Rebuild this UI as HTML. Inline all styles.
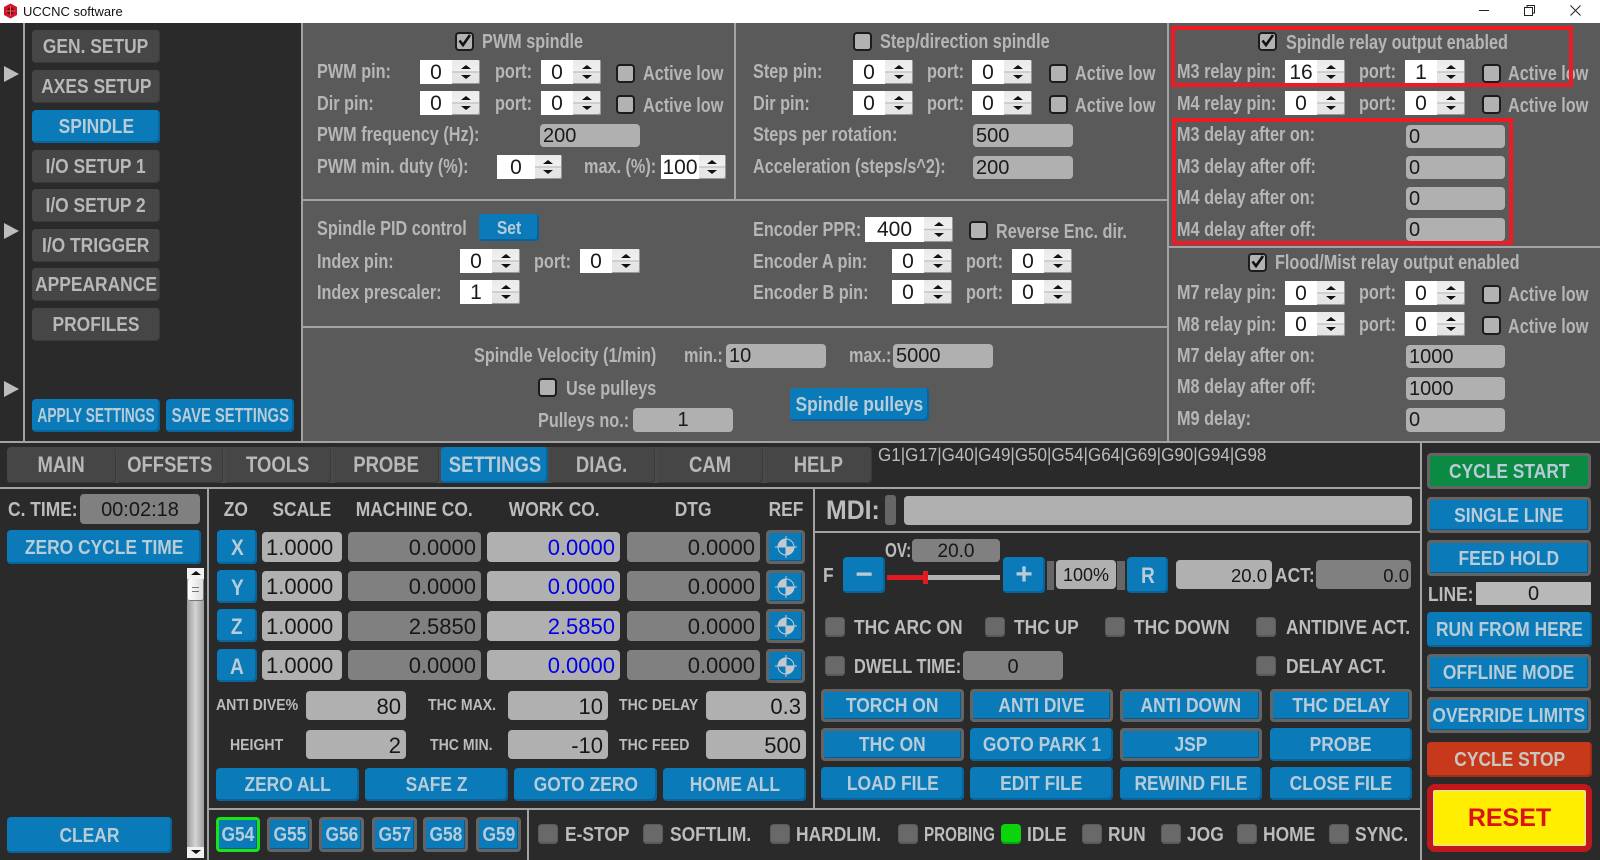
<!DOCTYPE html>
<html><head><meta charset="utf-8"><title>UCCNC software</title>
<style>
html,body{margin:0;padding:0;width:1600px;height:860px;overflow:hidden;background:#2a2a2a;font-family:"Liberation Sans",sans-serif}
div,i,svg{position:absolute;box-sizing:border-box}
.ln{background:#a3a3a3}
.l{white-space:nowrap;color:#b6b6b6;font:bold 20px/22px "Liberation Sans",sans-serif;transform:scaleX(.812);transform-origin:0 50%;margin-top:1px}
.s{white-space:nowrap;color:#bcbcbc;font:bold 20px/22px "Liberation Sans",sans-serif;transform:scaleX(.87);transform-origin:0 50%}
.t{white-space:nowrap;color:#bcbcbc;font:bold 16px/20px "Liberation Sans",sans-serif;transform:scaleX(.88);transform-origin:0 50%;margin-top:1px}
.b{display:flex;align-items:center;justify-content:center;border-radius:4px;font:bold 20px "Liberation Sans",sans-serif;color:#b8ccd8}
.b span{display:inline-block;white-space:nowrap;transform:scaleX(.87);margin-top:2px}
.tb{font-size:22px}
.tb span{transform:scaleX(.84);margin-top:0}
.bl{background:#0a7ab9;box-shadow:inset -2px -2px 0 #07659c}
.g{border:3px solid #646464;background:#0a7ab9;box-shadow:inset -1px -1px 0 #065c8f}
.d{background:#464646;box-shadow:inset -1px -1px 0 #3a3a3a;color:#b8b8b8}
.h{color:#bcbcbc}
.h span{margin-top:0}
.sp{height:24px;width:60px;margin-top:-1px;background:linear-gradient(#eaeaea 0,#f0f0f0 46%,#c4c4c4 48%,#c4c4c4 52%,#e6e6e6 54%,#e4e4e4 100%);border-radius:2px;box-shadow:inset -1px -1px 0 #999}
.sp i{left:0;top:0;bottom:0;width:32px;background:#fff;font:normal 21px/25px "Liberation Sans",sans-serif;color:#1a1a1a;text-align:center}
.sp::before,.sp::after{content:"";position:absolute;right:9px;border-left:5px solid transparent;border-right:5px solid transparent}
.sp::before{top:5px;border-bottom:4px solid #111}
.sp::after{bottom:5px;border-top:4px solid #111}
.cb{width:19px;height:19px;border:2px solid #1c1c1c;border-radius:4px;background:#b2b2b2}
.in{background:#b0b0b0;border-radius:4px;color:#1a1a1a;font:normal 20px/24px "Liberation Sans",sans-serif;padding-left:3px;white-space:nowrap}
.nu{background:#b0b0b0;border-radius:4px;color:#171717;font:normal 22px/30px "Liberation Sans",sans-serif;text-align:right;padding:1px 5px 0 0;white-space:nowrap}
.dk{background:#808080}
.bu{color:#0000e6}
.ctr{text-align:center;padding-right:0}
.lf{text-align:left;padding-left:4px;padding-right:0}
.ind{width:20px;height:20px;background:#696969;border-radius:4px;box-shadow:inset 0 -2px 0 #595959,inset 0 0 0 1px #5a5a5a}
.red{border:4px solid #ed1c24}
.tri{width:0;height:0;border-left:15px solid #bdbdbd;border-top:8px solid transparent;border-bottom:8px solid transparent;left:4px}
</style></head><body>

<!-- title bar -->
<div style="left:0;top:0;width:1600px;height:23px;background:#fff"></div>
<svg style="left:3px;top:3px" width="15" height="16" viewBox="0 0 15 16"><path d="M7.5 0.5L14 4v8l-6.5 3.5L1 12V4z" fill="#d4142a"/><circle cx="7.5" cy="8" r="3.6" fill="#6a1018"/><path d="M7.5 3v10M3 8h9" stroke="#ee606a" stroke-width="1"/></svg>
<div style="left:23px;top:3px;font:13px/17px 'Liberation Sans',sans-serif;color:#111;white-space:nowrap">UCCNC software</div>
<svg style="left:1470px;top:0" width="130" height="23" viewBox="0 0 130 23" fill="none" stroke="#222" stroke-width="1"><path d="M9 10.5h10"/><path d="M54.5 7.5h8v8h-8z"/><path d="M57 7.5V5.5h7.5v7.5h-2"/><path d="M100.5 5.5l10 10M110.5 5.5l-10 10"/></svg>

<!-- left sidebar -->
<div class="ln" style="left:23px;top:23px;width:2px;height:418px"></div>
<div class="tri" style="top:66px"></div>
<div class="tri" style="top:223px"></div>
<div class="tri" style="top:381px"></div>
<div class="b d" style="left:32px;top:30px;width:128px;height:33px"><span>GEN. SETUP</span></div>
<div class="b d" style="left:32px;top:70px;width:128px;height:33px"><span>AXES SETUP</span></div>
<div class="b bl" style="left:32px;top:110px;width:128px;height:33px"><span>SPINDLE</span></div>
<div class="b d" style="left:32px;top:150px;width:128px;height:33px"><span>I/O SETUP 1</span></div>
<div class="b d" style="left:32px;top:189px;width:128px;height:33px"><span>I/O SETUP 2</span></div>
<div class="b d" style="left:32px;top:229px;width:128px;height:33px"><span>I/O TRIGGER</span></div>
<div class="b d" style="left:32px;top:268px;width:128px;height:33px"><span>APPEARANCE</span></div>
<div class="b d" style="left:32px;top:308px;width:128px;height:33px"><span>PROFILES</span></div>
<div class="b bl" style="left:32px;top:399px;width:128px;height:33px;font-size:20px"><span style="transform:scaleX(.69)">APPLY SETTINGS</span></div>
<div class="b bl" style="left:166px;top:399px;width:128px;height:33px;font-size:20px"><span style="transform:scaleX(.74)">SAVE SETTINGS</span></div>

<!-- settings panel -->
<div style="left:302px;top:23px;width:1298px;height:418px;background:#5a5a5a"></div>
<div class="ln" style="left:301px;top:23px;width:2px;height:418px"></div>
<div class="ln" style="left:734px;top:23px;width:2px;height:177px"></div>
<div class="ln" style="left:302px;top:199px;width:865px;height:2px"></div>
<div class="ln" style="left:302px;top:326px;width:865px;height:2px"></div>
<div class="ln" style="left:1167px;top:23px;width:2px;height:418px"></div>
<div class="ln" style="left:1168px;top:246px;width:432px;height:2px"></div>

<!-- PWM section -->
<div class="cb" style="left:455px;top:32px"><svg style="left:0;top:-1px" width="15" height="15" viewBox="0 0 15 15"><path d="M2.5 7.5l3.5 4.5 7-10" fill="none" stroke="#111" stroke-width="2.6"/></svg></div>
<div class="l" style="left:482px;top:30px">PWM spindle</div>
<div class="l" style="left:317px;top:60px">PWM pin:</div>
<div class="sp" style="left:420px;top:61px"><i>0</i></div>
<div class="l" style="left:495px;top:60px">port:</div>
<div class="sp" style="left:541px;top:61px"><i>0</i></div>
<div class="cb" style="left:616px;top:64px"></div>
<div class="l" style="left:643px;top:62px">Active low</div>
<div class="l" style="left:317px;top:92px">Dir pin:</div>
<div class="sp" style="left:420px;top:92px"><i>0</i></div>
<div class="l" style="left:495px;top:92px">port:</div>
<div class="sp" style="left:541px;top:92px"><i>0</i></div>
<div class="cb" style="left:616px;top:95px"></div>
<div class="l" style="left:643px;top:94px">Active low</div>
<div class="l" style="left:317px;top:123px">PWM frequency (Hz):</div>
<div class="in" style="left:540px;top:124px;width:100px;height:23px">200</div>
<div class="l" style="left:317px;top:155px">PWM min. duty (%):</div>
<div class="sp" style="left:497px;top:156px;width:65px"><i style="width:38px">0</i></div>
<div class="l" style="left:584px;top:155px">max. (%):</div>
<div class="sp" style="left:661px;top:156px;width:65px"><i style="width:38px">100</i></div>

<!-- Step/dir section -->
<div class="cb" style="left:853px;top:32px"></div>
<div class="l" style="left:880px;top:30px">Step/direction spindle</div>
<div class="l" style="left:753px;top:60px">Step pin:</div>
<div class="sp" style="left:853px;top:61px"><i>0</i></div>
<div class="l" style="left:927px;top:60px">port:</div>
<div class="sp" style="left:972px;top:61px"><i>0</i></div>
<div class="cb" style="left:1049px;top:64px"></div>
<div class="l" style="left:1075px;top:62px">Active low</div>
<div class="l" style="left:753px;top:92px">Dir pin:</div>
<div class="sp" style="left:853px;top:92px"><i>0</i></div>
<div class="l" style="left:927px;top:92px">port:</div>
<div class="sp" style="left:972px;top:92px"><i>0</i></div>
<div class="cb" style="left:1049px;top:95px"></div>
<div class="l" style="left:1075px;top:94px">Active low</div>
<div class="l" style="left:753px;top:123px">Steps per rotation:</div>
<div class="in" style="left:973px;top:124px;width:100px;height:23px">500</div>
<div class="l" style="left:753px;top:155px">Acceleration (steps/s^2):</div>
<div class="in" style="left:973px;top:156px;width:100px;height:23px">200</div>

<!-- PID section -->
<div class="l" style="left:317px;top:217px">Spindle PID control</div>
<div class="b bl" style="left:479px;top:214px;width:60px;height:27px;font-size:18px;border-radius:3px"><span>Set</span></div>
<div class="l" style="left:317px;top:250px">Index pin:</div>
<div class="sp" style="left:460px;top:250px"><i>0</i></div>
<div class="l" style="left:534px;top:250px">port:</div>
<div class="sp" style="left:580px;top:250px"><i>0</i></div>
<div class="l" style="left:317px;top:281px">Index prescaler:</div>
<div class="sp" style="left:460px;top:281px"><i>1</i></div>
<div class="l" style="left:753px;top:218px">Encoder PPR:</div>
<div class="sp" style="left:865px;top:218px;width:88px;height:25px"><i style="width:59px">400</i></div>
<div class="cb" style="left:969px;top:221px"></div>
<div class="l" style="left:996px;top:220px">Reverse Enc. dir.</div>
<div class="l" style="left:753px;top:250px">Encoder A pin:</div>
<div class="sp" style="left:892px;top:250px"><i>0</i></div>
<div class="l" style="left:966px;top:250px">port:</div>
<div class="sp" style="left:1012px;top:250px"><i>0</i></div>
<div class="l" style="left:753px;top:281px">Encoder B pin:</div>
<div class="sp" style="left:892px;top:281px"><i>0</i></div>
<div class="l" style="left:966px;top:281px">port:</div>
<div class="sp" style="left:1012px;top:281px"><i>0</i></div>

<!-- Velocity section -->
<div class="l" style="left:474px;top:344px">Spindle Velocity (1/min)</div>
<div class="l" style="left:684px;top:344px">min.:</div>
<div class="in" style="left:726px;top:344px;width:100px;height:24px">10</div>
<div class="l" style="left:849px;top:344px">max.:</div>
<div class="in" style="left:893px;top:344px;width:100px;height:24px">5000</div>
<div class="cb" style="left:538px;top:378px"></div>
<div class="l" style="left:566px;top:377px">Use pulleys</div>
<div class="l" style="left:538px;top:409px">Pulleys no.:</div>
<div class="in" style="left:633px;top:408px;width:100px;height:24px;padding:0;text-align:center">1</div>
<div class="b bl" style="left:790px;top:388px;width:139px;height:33px"><span>Spindle pulleys</span></div>

<!-- Relay section -->
<div class="cb" style="left:1258px;top:32px"><svg style="left:0;top:-1px" width="15" height="15" viewBox="0 0 15 15"><path d="M2.5 7.5l3.5 4.5 7-10" fill="none" stroke="#111" stroke-width="2.6"/></svg></div>
<div class="l" style="left:1286px;top:31px">Spindle relay output enabled</div>
<div class="l" style="left:1177px;top:60px">M3 relay pin:</div>
<div class="sp" style="left:1285px;top:61px"><i>16</i></div>
<div class="l" style="left:1359px;top:60px">port:</div>
<div class="sp" style="left:1405px;top:61px"><i>1</i></div>
<div class="cb" style="left:1482px;top:64px"></div>
<div class="l" style="left:1508px;top:62px">Active low</div>
<div class="l" style="left:1177px;top:92px">M4 relay pin:</div>
<div class="sp" style="left:1285px;top:92px"><i>0</i></div>
<div class="l" style="left:1359px;top:92px">port:</div>
<div class="sp" style="left:1405px;top:92px"><i>0</i></div>
<div class="cb" style="left:1482px;top:95px"></div>
<div class="l" style="left:1508px;top:94px">Active low</div>
<div class="l" style="left:1177px;top:123px">M3 delay after on:</div>
<div class="in" style="left:1406px;top:125px;width:99px;height:23px">0</div>
<div class="l" style="left:1177px;top:155px">M3 delay after off:</div>
<div class="in" style="left:1406px;top:156px;width:99px;height:23px">0</div>
<div class="l" style="left:1177px;top:186px">M4 delay after on:</div>
<div class="in" style="left:1406px;top:187px;width:99px;height:23px">0</div>
<div class="l" style="left:1177px;top:218px">M4 delay after off:</div>
<div class="in" style="left:1406px;top:218px;width:99px;height:23px">0</div>
<div class="red" style="left:1171px;top:26px;width:402px;height:61px"></div>
<div class="red" style="left:1172px;top:118px;width:341px;height:127px"></div>

<div class="cb" style="left:1248px;top:253px"><svg style="left:0;top:-1px" width="15" height="15" viewBox="0 0 15 15"><path d="M2.5 7.5l3.5 4.5 7-10" fill="none" stroke="#111" stroke-width="2.6"/></svg></div>
<div class="l" style="left:1275px;top:251px">Flood/Mist relay output enabled</div>
<div class="l" style="left:1177px;top:281px">M7 relay pin:</div>
<div class="sp" style="left:1285px;top:282px"><i>0</i></div>
<div class="l" style="left:1359px;top:281px">port:</div>
<div class="sp" style="left:1405px;top:282px"><i>0</i></div>
<div class="cb" style="left:1482px;top:285px"></div>
<div class="l" style="left:1508px;top:283px">Active low</div>
<div class="l" style="left:1177px;top:313px">M8 relay pin:</div>
<div class="sp" style="left:1285px;top:313px"><i>0</i></div>
<div class="l" style="left:1359px;top:313px">port:</div>
<div class="sp" style="left:1405px;top:313px"><i>0</i></div>
<div class="cb" style="left:1482px;top:316px"></div>
<div class="l" style="left:1508px;top:315px">Active low</div>
<div class="l" style="left:1177px;top:344px">M7 delay after on:</div>
<div class="in" style="left:1406px;top:345px;width:99px;height:23px">1000</div>
<div class="l" style="left:1177px;top:375px">M8 delay after off:</div>
<div class="in" style="left:1406px;top:377px;width:99px;height:23px">1000</div>
<div class="l" style="left:1177px;top:407px">M9 delay:</div>
<div class="in" style="left:1406px;top:408px;width:99px;height:24px">0</div>

<!-- lines main -->
<div class="ln" style="left:0;top:441px;width:1600px;height:2px"></div>
<div class="ln" style="left:0;top:487px;width:1420px;height:2px"></div>
<div class="ln" style="left:1420px;top:441px;width:2px;height:419px"></div>
<div class="ln" style="left:207px;top:488px;width:2px;height:372px"></div>
<div class="ln" style="left:813px;top:488px;width:2px;height:321px"></div>
<div class="ln" style="left:814px;top:531px;width:606px;height:2px"></div>
<div class="ln" style="left:208px;top:808px;width:1212px;height:2px"></div>
<div class="ln" style="left:527px;top:809px;width:2px;height:51px"></div>

<!-- tabs -->
<div style="left:7px;top:447px;width:865px;height:36px;background:#4a4a4a;border-radius:5px"></div>
<div class="b d tb" style="left:7px;top:447px;width:109px;height:36px"><span>MAIN</span></div>
<div class="b d tb" style="left:117px;top:447px;width:106px;height:36px"><span>OFFSETS</span></div>
<div class="b d tb" style="left:225px;top:447px;width:106px;height:36px"><span>TOOLS</span></div>
<div class="b d tb" style="left:333px;top:447px;width:106px;height:36px"><span>PROBE</span></div>
<div class="b bl tb" style="left:441px;top:447px;width:107px;height:36px"><span>SETTINGS</span></div>
<div class="b d tb" style="left:549px;top:447px;width:106px;height:36px"><span>DIAG.</span></div>
<div class="b d tb" style="left:657px;top:447px;width:106px;height:36px"><span>CAM</span></div>
<div class="b d tb" style="left:765px;top:447px;width:107px;height:36px"><span>HELP</span></div>
<div style="left:878px;top:444px;font:18px/22px 'Liberation Sans',sans-serif;color:#bcbcbc;white-space:nowrap;transform:scaleX(.945);transform-origin:0 50%">G1|G17|G40|G49|G50|G54|G64|G69|G90|G94|G98</div>

<!-- left column -->
<div class="s" style="left:8px;top:499px">C. TIME:</div>
<div class="nu dk ctr" style="left:80px;top:494px;width:120px;height:30px;font-size:20px">00:02:18</div>
<div class="b bl" style="left:7px;top:530px;width:194px;height:34px"><span>ZERO CYCLE TIME</span></div>
<div style="left:187px;top:568px;width:17px;height:290px;background:linear-gradient(90deg,#9a9a9a,#d4d4d4 50%,#9c9c9c)"></div>
<div style="left:187px;top:568px;width:17px;height:11px;background:#f2f2f2"></div>
<div style="left:191px;top:571px;width:0;height:0;border-left:5px solid transparent;border-right:5px solid transparent;border-bottom:4px solid #111"></div>
<div style="left:188px;top:579px;width:15px;height:21px;background:linear-gradient(90deg,#fff,#dcdcdc);border-radius:2px;box-shadow:1px 1px 0 #777"></div>
<div style="left:192px;top:587px;width:7px;height:5px;border-top:1px solid #777;border-bottom:1px solid #777"></div>
<div style="left:187px;top:847px;width:17px;height:11px;background:#f2f2f2"></div>
<div style="left:191px;top:850px;width:0;height:0;border-left:5px solid transparent;border-right:5px solid transparent;border-top:4px solid #111"></div>
<div class="b bl" style="left:7px;top:817px;width:165px;height:36px"><span>CLEAR</span></div>

<!-- table -->
<div class="b h" style="left:216px;top:499px;width:40px;height:22px"><span>ZO</span></div>
<div class="b h" style="left:262px;top:499px;width:80px;height:22px"><span>SCALE</span></div>
<div class="b h" style="left:348px;top:499px;width:133px;height:22px"><span>MACHINE CO.</span></div>
<div class="b h" style="left:487px;top:499px;width:135px;height:22px"><span>WORK CO.</span></div>
<div class="b h" style="left:627px;top:499px;width:133px;height:22px"><span>DTG</span></div>
<div class="b h" style="left:766px;top:499px;width:40px;height:22px"><span>REF</span></div>

<div class="b bl" style="left:217px;top:530px;width:40px;height:34px;font-size:22px"><span>X</span></div>
<div class="nu lf" style="left:262px;top:532px;width:80px;height:30px">1.0000</div>
<div class="nu dk" style="left:348px;top:532px;width:133px;height:30px">0.0000</div>
<div class="nu bu" style="left:487px;top:532px;width:133px;height:30px">0.0000</div>
<div class="nu dk" style="left:627px;top:532px;width:133px;height:30px">0.0000</div>
<div class="b g" style="left:766px;top:530px;width:39px;height:34px"><svg width="24" height="24" viewBox="0 0 24 24" style="left:5px;top:2px"><path d="M12 12V4A8 8 0 0 0 4 12Z M12 12V20A8 8 0 0 0 20 12Z" fill="#c4c8cc"/><circle cx="12" cy="12" r="8" fill="none" stroke="#c4ccd2" stroke-width="1"/><path d="M12 1v22M1 12h22" stroke="#c4ccd2" stroke-width="1"/></svg></div>

<div class="b bl" style="left:217px;top:570px;width:40px;height:33px;font-size:22px"><span>Y</span></div>
<div class="nu lf" style="left:262px;top:571px;width:80px;height:30px">1.0000</div>
<div class="nu dk" style="left:348px;top:571px;width:133px;height:30px">0.0000</div>
<div class="nu bu" style="left:487px;top:571px;width:133px;height:30px">0.0000</div>
<div class="nu dk" style="left:627px;top:571px;width:133px;height:30px">0.0000</div>
<div class="b g" style="left:766px;top:570px;width:39px;height:34px"><svg width="24" height="24" viewBox="0 0 24 24" style="left:5px;top:2px"><path d="M12 12V4A8 8 0 0 0 4 12Z M12 12V20A8 8 0 0 0 20 12Z" fill="#c4c8cc"/><circle cx="12" cy="12" r="8" fill="none" stroke="#c4ccd2" stroke-width="1"/><path d="M12 1v22M1 12h22" stroke="#c4ccd2" stroke-width="1"/></svg></div>

<div class="b bl" style="left:217px;top:609px;width:40px;height:33px;font-size:22px"><span>Z</span></div>
<div class="nu lf" style="left:262px;top:611px;width:80px;height:30px">1.0000</div>
<div class="nu dk" style="left:348px;top:611px;width:133px;height:30px">2.5850</div>
<div class="nu bu" style="left:487px;top:611px;width:133px;height:30px">2.5850</div>
<div class="nu dk" style="left:627px;top:611px;width:133px;height:30px">0.0000</div>
<div class="b g" style="left:766px;top:609px;width:39px;height:34px"><svg width="24" height="24" viewBox="0 0 24 24" style="left:5px;top:2px"><path d="M12 12V4A8 8 0 0 0 4 12Z M12 12V20A8 8 0 0 0 20 12Z" fill="#c4c8cc"/><circle cx="12" cy="12" r="8" fill="none" stroke="#c4ccd2" stroke-width="1"/><path d="M12 1v22M1 12h22" stroke="#c4ccd2" stroke-width="1"/></svg></div>

<div class="b bl" style="left:217px;top:649px;width:40px;height:33px;font-size:22px"><span>A</span></div>
<div class="nu lf" style="left:262px;top:650px;width:80px;height:30px">1.0000</div>
<div class="nu dk" style="left:348px;top:650px;width:133px;height:30px">0.0000</div>
<div class="nu bu" style="left:487px;top:650px;width:133px;height:30px">0.0000</div>
<div class="nu dk" style="left:627px;top:650px;width:133px;height:30px">0.0000</div>
<div class="b g" style="left:766px;top:649px;width:39px;height:34px"><svg width="24" height="24" viewBox="0 0 24 24" style="left:5px;top:2px"><path d="M12 12V4A8 8 0 0 0 4 12Z M12 12V20A8 8 0 0 0 20 12Z" fill="#c4c8cc"/><circle cx="12" cy="12" r="8" fill="none" stroke="#c4ccd2" stroke-width="1"/><path d="M12 1v22M1 12h22" stroke="#c4ccd2" stroke-width="1"/></svg></div>

<div class="t" style="left:216px;top:695px">ANTI DIVE%</div>
<div class="nu" style="left:306px;top:691px;width:100px;height:29px;line-height:29px">80</div>
<div class="t" style="left:428px;top:695px">THC MAX.</div>
<div class="nu" style="left:508px;top:691px;width:100px;height:29px;line-height:29px">10</div>
<div class="t" style="left:619px;top:695px">THC DELAY</div>
<div class="nu" style="left:706px;top:691px;width:100px;height:29px;line-height:29px">0.3</div>
<div class="t" style="left:230px;top:735px">HEIGHT</div>
<div class="nu" style="left:306px;top:730px;width:100px;height:29px;line-height:29px">2</div>
<div class="t" style="left:430px;top:735px">THC MIN.</div>
<div class="nu" style="left:508px;top:730px;width:100px;height:29px;line-height:29px">-10</div>
<div class="t" style="left:619px;top:735px">THC FEED</div>
<div class="nu" style="left:706px;top:730px;width:100px;height:29px;line-height:29px">500</div>

<div class="b bl" style="left:216px;top:768px;width:143px;height:33px"><span>ZERO ALL</span></div>
<div class="b bl" style="left:365px;top:768px;width:143px;height:33px"><span>SAFE Z</span></div>
<div class="b bl" style="left:514px;top:768px;width:143px;height:33px"><span>GOTO ZERO</span></div>
<div class="b bl" style="left:663px;top:768px;width:143px;height:33px"><span>HOME ALL</span></div>

<!-- G buttons -->
<div class="b g" style="left:216px;top:817px;width:44px;height:35px;border-color:#16e616"><span>G54</span></div>
<div class="b g" style="left:267px;top:817px;width:45px;height:35px"><span>G55</span></div>
<div class="b g" style="left:319px;top:817px;width:45px;height:35px"><span>G56</span></div>
<div class="b g" style="left:372px;top:817px;width:45px;height:35px"><span>G57</span></div>
<div class="b g" style="left:423px;top:817px;width:45px;height:35px"><span>G58</span></div>
<div class="b g" style="left:476px;top:817px;width:45px;height:35px"><span>G59</span></div>

<!-- status row -->
<div class="ind" style="left:538px;top:824px"></div><div class="s" style="left:565px;top:824px">E-STOP</div>
<div class="ind" style="left:643px;top:824px"></div><div class="s" style="left:670px;top:824px">SOFTLIM.</div>
<div class="ind" style="left:770px;top:824px"></div><div class="s" style="left:796px;top:824px">HARDLIM.</div>
<div class="ind" style="left:898px;top:824px"></div><div class="s" style="left:924px;top:824px;transform:scaleX(.76)">PROBING</div>
<div class="ind" style="left:1001px;top:824px;background:#0cd40c;box-shadow:inset 0 -2px 0 #09a509"></div><div class="s" style="left:1027px;top:824px">IDLE</div>
<div class="ind" style="left:1082px;top:824px"></div><div class="s" style="left:1108px;top:824px">RUN</div>
<div class="ind" style="left:1161px;top:824px"></div><div class="s" style="left:1187px;top:824px">JOG</div>
<div class="ind" style="left:1237px;top:824px"></div><div class="s" style="left:1263px;top:824px">HOME</div>
<div class="ind" style="left:1329px;top:824px"></div><div class="s" style="left:1355px;top:824px">SYNC.</div>

<!-- MDI -->
<div style="left:826px;top:495px;font:bold 27px/30px 'Liberation Sans',sans-serif;color:#bcbcbc;transform:scaleX(.92);transform-origin:0 50%">MDI:</div>
<div style="left:885px;top:495px;width:11px;height:30px;background:#666;border-radius:3px"></div>
<div style="left:904px;top:496px;width:508px;height:29px;background:#b0b0b0;border-radius:4px"></div>

<!-- feed -->
<div class="s" style="left:823px;top:565px">F</div>
<div class="b bl" style="left:843px;top:557px;width:42px;height:36px;font-size:30px"><span style="transform:none;margin-top:0">&#8722;</span></div>
<div class="s" style="left:885px;top:540px;transform:scaleX(.76)">OV:</div>
<div class="nu dk ctr" style="left:912px;top:539px;width:88px;height:23px;font-size:19px;line-height:24px">20.0</div>
<div style="left:887px;top:575px;width:113px;height:5px;background:#b4b4b4"></div>
<div style="left:887px;top:575px;width:38px;height:5px;background:#e01a22"></div>
<div style="left:923px;top:571px;width:5px;height:13px;background:#e01a22"></div>
<div class="b bl" style="left:1003px;top:557px;width:42px;height:36px;font-size:30px"><span style="transform:none;margin-top:0">+</span></div>
<div style="left:1047px;top:561px;width:7px;height:29px;background:#666"></div>
<div class="nu ctr" style="left:1056px;top:560px;width:60px;height:29px;font-size:18px;line-height:28px">100%</div>
<div style="left:1117px;top:561px;width:8px;height:29px;background:#666"></div>
<div class="b bl" style="left:1127px;top:557px;width:41px;height:36px;font-size:22px"><span>R</span></div>
<div class="nu" style="left:1176px;top:560px;width:96px;height:29px;font-size:18.5px;padding-right:5px">20.0</div>
<div class="s" style="left:1275px;top:565px">ACT:</div>
<div class="nu dk" style="left:1316px;top:560px;width:95px;height:29px;font-size:18.5px;padding-right:2px">0.0</div>

<!-- indicators -->
<div class="ind" style="left:825px;top:617px"></div><div class="s" style="left:854px;top:617px">THC ARC ON</div>
<div class="ind" style="left:985px;top:617px"></div><div class="s" style="left:1014px;top:617px">THC UP</div>
<div class="ind" style="left:1105px;top:617px"></div><div class="s" style="left:1134px;top:617px">THC DOWN</div>
<div class="ind" style="left:1256px;top:617px"></div><div class="s" style="left:1286px;top:617px">ANTIDIVE ACT.</div>
<div class="ind" style="left:825px;top:656px"></div><div class="s" style="left:854px;top:656px;transform:scaleX(.82)">DWELL TIME:</div>
<div class="nu dk ctr" style="left:963px;top:651px;width:100px;height:29px;font-size:20px">0</div>
<div class="ind" style="left:1256px;top:656px"></div><div class="s" style="left:1286px;top:656px">DELAY ACT.</div>

<!-- grid -->
<div class="b g" style="left:821px;top:689px;width:143px;height:33px"><span>TORCH ON</span></div>
<div class="b g" style="left:970px;top:689px;width:143px;height:33px"><span>ANTI DIVE</span></div>
<div class="b g" style="left:1120px;top:689px;width:142px;height:33px"><span>ANTI DOWN</span></div>
<div class="b g" style="left:1270px;top:689px;width:142px;height:33px"><span>THC DELAY</span></div>
<div class="b g" style="left:821px;top:728px;width:143px;height:33px"><span>THC ON</span></div>
<div class="b bl" style="left:970px;top:728px;width:143px;height:33px"><span>GOTO PARK 1</span></div>
<div class="b g" style="left:1120px;top:728px;width:142px;height:33px"><span>JSP</span></div>
<div class="b bl" style="left:1270px;top:728px;width:142px;height:33px"><span>PROBE</span></div>
<div class="b bl" style="left:821px;top:767px;width:143px;height:33px"><span>LOAD FILE</span></div>
<div class="b bl" style="left:970px;top:767px;width:143px;height:33px"><span>EDIT FILE</span></div>
<div class="b bl" style="left:1120px;top:767px;width:142px;height:33px"><span>REWIND FILE</span></div>
<div class="b bl" style="left:1270px;top:767px;width:142px;height:33px"><span>CLOSE FILE</span></div>

<!-- right column -->
<div class="b g" style="left:1427px;top:453px;width:164px;height:36px;background:#0a8a42;box-shadow:none"><span>CYCLE START</span></div>
<div class="b g" style="left:1427px;top:497px;width:164px;height:36px"><span>SINGLE LINE</span></div>
<div class="b g" style="left:1427px;top:540px;width:164px;height:36px"><span>FEED HOLD</span></div>
<div class="s" style="left:1428px;top:584px">LINE:</div>
<div class="nu ctr" style="left:1476px;top:582px;width:115px;height:23px;font-size:20px;line-height:23px;border-radius:1px;background:#b8b8b8">0</div>
<div class="b bl" style="left:1427px;top:612px;width:165px;height:35px"><span>RUN FROM HERE</span></div>
<div class="b g" style="left:1427px;top:654px;width:164px;height:37px"><span>OFFLINE MODE</span></div>
<div class="b g" style="left:1427px;top:697px;width:164px;height:36px"><span>OVERRIDE LIMITS</span></div>
<div class="b" style="left:1427px;top:742px;width:165px;height:35px;background:#c8391c;box-shadow:inset -2px -2px 0 #a52d14;color:#c8c8c0"><span>CYCLE STOP</span></div>
<div class="b" style="left:1427px;top:784px;width:165px;height:68px;background:#ffee00;border:6px solid #c0181a;border-radius:8px;color:#d8131a;font-size:25px;box-shadow:inset 0 0 0 1px #ddd"><span style="transform:none;margin-top:0">RESET</span></div>

</body></html>
